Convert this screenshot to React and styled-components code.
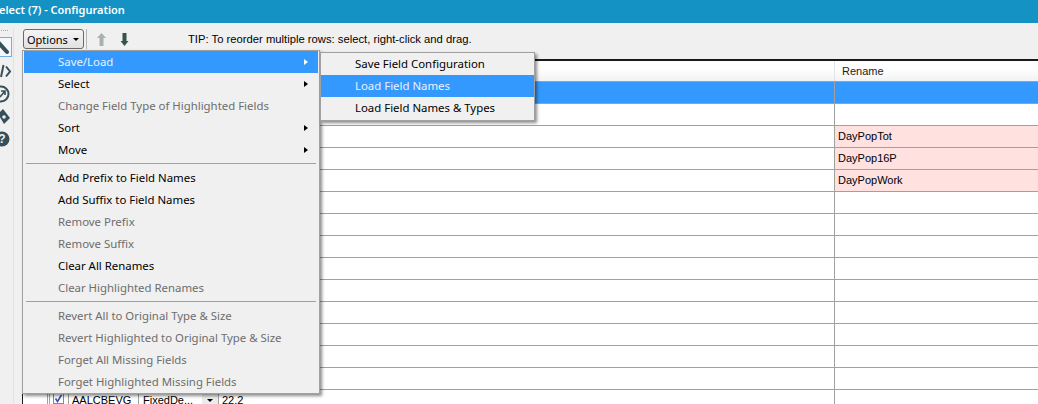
import React from 'react';
import styled, { createGlobalStyle } from 'styled-components';

const Global = createGlobalStyle`
  html, body {
    margin: 0;
    padding: 0;
    background: #f0f0f0;
    overflow: hidden;
  }
  body {
    font-family: "Noto Sans", "Liberation Sans", sans-serif;
    font-size: 11.4px;
    color: #000;
  }
`;

const Page = styled.div`
  position: relative;
  width: 1038px;
  height: 404px;
  overflow: hidden;
  background: #f0f0f0;
`;

const TitleBar = styled.div`
  height: 23px;
  background: #1592c4;
  color: #fff;
  font-weight: 600;
  font-size: 11px;
  line-height: 20px;
  margin-bottom: 5px;
  white-space: nowrap;
  overflow: hidden;
  text-indent: -7px;
`;

const Body = styled.div`
  display: flex;
  height: 376px;
`;

const SideBar = styled.div`
  width: 13px;
  flex: none;
  border-right: 1px solid #e2e2e2;
  display: flex;
  flex-direction: column;
  gap: 5px;
  overflow: hidden;
`;

const Gripper = styled.div`
  width: 7px;
  height: 0;
  margin: 2px 0 0 1px;
  border-top: 1px dotted #a5a5a5;
`;

const SelectedTool = styled.div`
  width: 11px;
  height: 18px;
  margin-top: 1px;
  border: 1px solid #6fb0e6;
  border-left: none;
  background: #f4f8fb;
`;

const SideIcon = styled.svg`
  flex: none;
  width: 13px;
  height: 18px;
  display: block;
`;

const Main = styled.div`
  flex: 1;
  min-width: 0;
  padding-left: 8px;
`;

const Toolbar = styled.div`
  height: 22px;
  display: flex;
  align-items: center;
  font-family: "Liberation Sans", sans-serif;
  font-size: 11.26px;
`;

const OptionsButton = styled.div`
  width: 61px;
  height: 20px;
  box-sizing: border-box;
  margin-left: 1px;
  border: 1px solid #6a6a6a;
  border-radius: 3px;
  background: linear-gradient(#f4f4f4, #e2e2e2);
  display: flex;
  align-items: center;
  padding-left: 3px;
  gap: 5px;
  font-family: "Noto Sans", sans-serif;
  font-size: 11px;
`;

const Caret = styled.span`
  width: 0;
  height: 0;
  border-left: 3px solid transparent;
  border-right: 3px solid transparent;
  border-top: 3px solid #000;
`;

const ToolDivider = styled.div`
  width: 1px;
  height: 20px;
  margin-left: 2px;
  background: #b5b5b5;
`;

const ArrowIcon = styled.svg`
  width: 10px;
  height: 15px;
  margin-left: ${p => p.$gap}px;
  flex: none;
`;

const Tip = styled.div`
  margin-left: 58px;
  white-space: nowrap;
`;

const Table = styled.div`
  margin-top: 9px;
  border-top: 2px solid #1a1a1a;
  border-left: 1px solid #1a1a1a;
  background: #fff;
  height: 345px;
  overflow: hidden;
  font-family: "Liberation Sans", sans-serif;
  font-size: 11px;
`;

const HeaderRow = styled.div`
  display: grid;
  grid-template-columns: 811px 1fr;
  height: 20px;
  background: linear-gradient(#fff 40%, #f1f2f3);
  border-bottom: 1px solid #a0a0a0;
`;

const HeaderCell = styled.div`
  padding-left: 7px;
  line-height: 20px;
  color: #222;
  border-left: 1px solid #e3e4e5;
`;

const Row = styled.div`
  display: grid;
  grid-template-columns: 812px 1fr;
  height: 21px;
  border-bottom: 1px solid #a0a0a0;
  background: ${p => (p.$selected ? '#3399ff' : '#fff')};
`;

const Cell = styled.div`
  border-right: ${p => (p.$first ? '1px solid #a0a0a0' : 'none')};
  padding-left: ${p => (p.$first ? 0 : 3)}px;
  line-height: 21px;
  min-width: 0;
  background: ${p => (p.$pink ? '#ffe1df' : 'transparent')};
`;

const FieldRow = styled.div`
  display: flex;
  height: 21px;
  padding-left: 24px;
`;

const GutterCell = styled.span`
  width: 1px;
  border-left: 1px solid #a0a0a0;
  border-right: 1px solid #a0a0a0;
`;

const CheckCell = styled.span`
  width: 18px;
  flex: none;
  padding: 3px 0 0 3px;
  box-sizing: border-box;
`;

const CheckBox = styled.svg`
  width: 11px;
  height: 11px;
  display: block;
`;

const FieldCell = styled.span`
  width: 70px;
  box-sizing: border-box;
  flex: none;
  padding-left: 3px;
  border-left: 1px solid #a0a0a0;
`;

const TypeCell = styled.span`
  width: 81px;
  flex: none;
  box-sizing: border-box;
  padding-left: 4px;
  border-left: 1px solid #a0a0a0;
  border-right: 1px solid #a0a0a0;
  display: flex;
  justify-content: space-between;
`;

const DropButton = styled.span`
  width: 16px;
  background: #ececec;
  display: flex;
  align-items: center;
  justify-content: center;
`;

const SizeCell = styled.span`
  padding-left: 3px;
`;

const Menu = styled.div`
  position: absolute;
  left: ${p => p.$left}px;
  top: ${p => p.$top}px;
  width: ${p => p.$width}px;
  box-sizing: border-box;
  padding: ${p => p.$pad};
  background: #f0f0f0;
  border: 1px solid #a0a0a0;
  box-shadow: 2px 2px 3px rgba(0, 0, 0, 0.45);
  z-index: ${p => p.$z};
`;

const Item = styled.div`
  position: relative;
  height: 22px;
  line-height: 22px;
  padding-left: ${p => p.$indent}px;
  white-space: nowrap;
  color: ${p => (p.$active ? '#e8f2ff' : p.$disabled ? '#6d6d6d' : '#000')};
  background: ${p => (p.$active ? '#3399ff' : 'transparent')};
`;

const SubArrow = styled.span`
  position: absolute;
  right: 10px;
  top: 8px;
  width: 0;
  height: 0;
  border-top: 3.5px solid transparent;
  border-bottom: 3.5px solid transparent;
  border-left: 4px solid ${p => (p.$active ? '#fff' : '#000')};
`;

const Separator = styled.div`
  height: 1px;
  margin: 2px 2px 3px 2px;
  background: #a0a0a0;
`;

const mainMenu = [
  [
    { text: 'Save/Load', sub: true, active: true },
    { text: 'Select', sub: true },
    { text: 'Change Field Type of Highlighted Fields', disabled: true },
    { text: 'Sort', sub: true },
    { text: 'Move', sub: true },
  ],
  [
    { text: 'Add Prefix to Field Names' },
    { text: 'Add Suffix to Field Names' },
    { text: 'Remove Prefix', disabled: true },
    { text: 'Remove Suffix', disabled: true },
    { text: 'Clear All Renames' },
    { text: 'Clear Highlighted Renames', disabled: true },
  ],
  [
    { text: 'Revert All to Original Type & Size', disabled: true },
    { text: 'Revert Highlighted to Original Type & Size', disabled: true },
    { text: 'Forget All Missing Fields', disabled: true },
    { text: 'Forget Highlighted Missing Fields', disabled: true },
  ],
];

const renames = { 2: 'DayPopTot', 3: 'DayPop16P', 4: 'DayPopWork' };

const rows = Array.from({ length: 14 }, (_, i) => i);

const iconColor = '#35505a';

function SideIcons() {
  return (
    <>
      <Gripper />
      <SelectedTool>
        <SideIcon viewBox="0 0 13 18">
          <path d="M-1 5 L7 14" stroke={iconColor} strokeWidth="4" strokeLinecap="round" />
        </SideIcon>
      </SelectedTool>
      <SideIcon viewBox="0 0 13 18">
        <path d="M3.5 3 L1 15 M6 4.5 L10 9.5 L6 14.5" stroke={iconColor} strokeWidth="2" fill="none" />
      </SideIcon>
      <SideIcon viewBox="0 0 13 18">
        <circle cx="1" cy="9" r="7.5" stroke={iconColor} strokeWidth="2" fill="none" />
        <path d="M0 12 L5 6 M1 6 H5 V10" stroke={iconColor} strokeWidth="1.6" fill="none" />
      </SideIcon>
      <SideIcon viewBox="0 0 13 18">
        <path d="M-2 6 L3 1 L10 10 L4 16 Z" fill={iconColor} />
        <circle cx="4" cy="9" r="1.8" fill="#f0f0f0" />
      </SideIcon>
      <SideIcon viewBox="0 0 13 18">
        <circle cx="2" cy="8" r="7.5" fill={iconColor} />
        <text x="2" y="12" fontSize="12" fontWeight="700" textAnchor="middle" fill="#f0f0f0" fontFamily="Liberation Sans, sans-serif">?</text>
      </SideIcon>
    </>
  );
}

export default function App() {
  return (
    <Page>
      <Global />
      <TitleBar>Select (7) - Configuration</TitleBar>
      <Body>
        <SideBar>
          <SideIcons />
        </SideBar>
        <Main>
          <Toolbar>
            <OptionsButton>
              Options <Caret />
            </OptionsButton>
            <ToolDivider />
            <ArrowIcon $gap={10} viewBox="0 0 10 15">
              <path d="M4.5 1 L9 6 H6.5 V14 H2.5 V6 H0 Z" fill="#a9b1ad" />
            </ArrowIcon>
            <ArrowIcon $gap={13} viewBox="0 0 10 15">
              <path d="M4.5 14 L8.5 9 H6.5 V1 H2.5 V9 H0.5 Z" fill="#36524a" />
            </ArrowIcon>
            <Tip>TIP: To reorder multiple rows: select, right-click and drag.</Tip>
          </Toolbar>
          <Table>
            <HeaderRow>
              <div />
              <HeaderCell>Rename</HeaderCell>
            </HeaderRow>
            {rows.map(i => (
              <Row key={i} $selected={i === 0}>
                <Cell $first />
                <Cell $pink={!!renames[i]}>{renames[i]}</Cell>
              </Row>
            ))}
            <Row>
              <Cell $first>
                <FieldRow>
                  <GutterCell />
                  <CheckCell>
                    <CheckBox viewBox="0 0 11 11">
                      <rect x="0.5" y="0.5" width="10" height="10" fill="#fff" stroke="#8a8a8a" />
                      <path d="M2.5 5.5 L4.5 8.5 L8.5 2" stroke="#3b4fb0" strokeWidth="1.6" fill="none" />
                    </CheckBox>
                  </CheckCell>
                  <FieldCell>AALCBEVG</FieldCell>
                  <TypeCell>
                    FixedDe...
                    <DropButton>
                      <Caret />
                    </DropButton>
                  </TypeCell>
                  <SizeCell>22.2</SizeCell>
                </FieldRow>
              </Cell>
              <Cell />
            </Row>
          </Table>
        </Main>
      </Body>

      <Menu $left={22} $top={50} $width={298} $pad="0 1px" $z={1}>
        {mainMenu.map((group, g) => (
          <React.Fragment key={g}>
            {g > 0 && <Separator />}
            {group.map(item => (
              <Item key={item.text} $indent={34} $active={item.active} $disabled={item.disabled}>
                {item.text}
                {item.sub && <SubArrow $active={item.active} />}
              </Item>
            ))}
          </React.Fragment>
        ))}
      </Menu>

      <Menu $left={320} $top={52} $width={215} $pad="0 0 1px" $z={2}>
        <Item $indent={34}>Save Field Configuration</Item>
        <Item $indent={34} $active>Load Field Names</Item>
        <Item $indent={34}>Load Field Names &amp; Types</Item>
      </Menu>
    </Page>
  );
}
